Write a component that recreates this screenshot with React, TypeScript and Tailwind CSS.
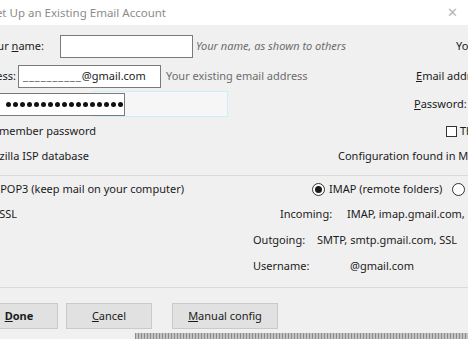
import React from "react";

const font = "font-['Noto_Sans','Liberation_Sans',sans-serif]";

function Input({ className, children }: { className?: string; children?: React.ReactNode }) {
  return (
    <div className={`flex h-[23px] shrink-0 items-center border border-[#7a7a7a] bg-white px-1 ${className ?? ""}`}>
      {children}
    </div>
  );
}

// Left text that is cut by the window edge: right-aligned in a box ending at `w`.
function Clip({ w, children }: { w: string; children: React.ReactNode }) {
  return <div className={`flex shrink-0 justify-end whitespace-nowrap ${w}`}>{children}</div>;
}

function Row({ h, left, leftW, right }: { h: string; left: React.ReactNode; leftW: string; right?: React.ReactNode }) {
  return (
    <div className={`flex shrink-0 items-center whitespace-nowrap ${h}`}>
      <div className={`flex shrink-0 items-center ${leftW}`}>{left}</div>
      {right}
    </div>
  );
}

function Button({ children, className }: { children: React.ReactNode; className?: string }) {
  return (
    <div className={`flex h-[26px] shrink-0 items-center justify-center border border-[#cacaca] bg-[#e1e1e1] ${className ?? ""}`}>
      {children}
    </div>
  );
}

export default function App() {
  return (
    <div className={`flex h-[339px] w-[468px] flex-col overflow-hidden bg-[#f0f0f0] text-[11px] text-[#1b1b1b] ${font}`}>
      {/* title bar */}
      <div className="flex h-[25px] shrink-0 items-center bg-white">
        <Clip w="w-[166px]">
          <span className="text-[11.5px] text-[#8c8c8c]">Set Up an Existing Email Account</span>
        </Clip>
        <span className="ml-auto mr-[10px] text-[13px] text-[#b5b5b5]">✕</span>
      </div>

      <div className="h-[6px] shrink-0" />

      <Row
        h="h-[30px]"
        leftW="w-[456px]"
        left={
          <>
            <Clip w="w-[44px]">
              <span>
                Your <u>n</u>ame:
              </span>
            </Clip>
            <Input className="ml-[16px] w-[133px]" />
            <span className="ml-[3px] italic text-[#6d6d6d]">Your name, as shown to others</span>
          </>
        }
        right={<span>Your name:</span>}
      />

      <Row
        h="h-[30px]"
        leftW="w-[416px]"
        left={
          <>
            <Clip w="w-[16px]">
              <span>Email address:</span>
            </Clip>
            <Input className="ml-[2px] w-[143px]">
              <span className="tracking-[1px] text-[#555]">__________</span>
              <span>@gmail.com</span>
            </Input>
            <span className="ml-[5px] text-[#6d6d6d]">Your existing email address</span>
          </>
        }
        right={
          <span>
            <u>E</u>mail address:
          </span>
        }
      />

      <Row
        h="h-[26px]"
        leftW="w-[414px]"
        left={
          <>
            <Input className="relative z-10 -ml-[2px] w-[127px] px-0">
              <div className="ml-[3px] flex shrink-0 gap-[2px]">
                {Array.from({ length: 17 }).map((_, i) => (
                  <span key={i} className="h-[5px] w-[5px] shrink-0 rounded-full bg-[#111]" />
                ))}
              </div>
            </Input>
            <div className="-ml-[32px] h-[26px] w-[135px] shrink-0 border border-[#cdeefb] bg-[#f6f6f6]" />
          </>
        }
        right={
          <>
            <span>
              <u>P</u>assword:
            </span>
            <span className="ml-[6px] h-[20px] w-[20px] shrink-0 border border-[#7a7a7a] bg-white" />
          </>
        }
      />

      <Row
        h="h-[28px]"
        leftW="w-[446px]"
        left={
          <Clip w="w-[96px]">
            <span>Remember password</span>
          </Clip>
        }
        right={
          <>
            <span className="h-[11px] w-[11px] shrink-0 border border-[#333] bg-white" />
            <span className="ml-[3px]">The</span>
          </>
        }
      />

      <Row
        h="h-[22px]"
        leftW="w-[338px]"
        left={
          <Clip w="w-[89px]">
            <span>Mozilla ISP database</span>
          </Clip>
        }
        right={<span>Configuration found in Mozilla ISP database</span>}
      />

      <div className="mt-[8px] h-px shrink-0 bg-[#dadada]" />

      <Row
        h="h-[26px]"
        leftW="w-[312px]"
        left={
          <Clip w="w-[184px]">
            <span>POP3 (keep mail on your computer)</span>
          </Clip>
        }
        right={
          <>
            <span className="flex h-[13px] w-[13px] shrink-0 items-center justify-center rounded-full border border-[#333] bg-white">
              <span className="h-[7px] w-[7px] rounded-full bg-[#1b1b1b]" />
            </span>
            <span className="ml-[4px]">IMAP (remote folders)</span>
            <span className="ml-[10px] h-[13px] w-[13px] shrink-0 rounded-full border border-[#333] bg-white" />
          </>
        }
      />

      <Row
        h="h-[24px]"
        leftW="w-[280px]"
        left={
          <Clip w="w-[17px]">
            <span>SSL</span>
          </Clip>
        }
        right={
          <>
            <span className="w-[67px] shrink-0">Incoming:</span>
            <span>IMAP, imap.gmail.com, 993, SSL</span>
          </>
        }
      />

      <Row
        h="h-[28px]"
        leftW="w-[253px]"
        left={null}
        right={
          <>
            <span className="w-[64px] shrink-0">Outgoing:</span>
            <span>SMTP, smtp.gmail.com, SSL</span>
          </>
        }
      />

      <Row
        h="h-[24px]"
        leftW="w-[253px]"
        left={null}
        right={
          <>
            <span className="w-[97px] shrink-0">Username:</span>
            <span>@gmail.com</span>
          </>
        }
      />

      <div className="mt-[9px] h-px shrink-0 bg-[#dadada]" />

      <div className="mt-[15px] flex shrink-0 items-center">
        <Button className="-ml-[20px] w-[78px] font-bold">
          <span>
            <u>D</u>one
          </span>
        </Button>
        <Button className="ml-[8px] w-[86px]">
          <span>
            <u>C</u>ancel
          </span>
        </Button>
        <Button className="ml-[20px] w-[106px]">
          <span>
            <u>M</u>anual config
          </span>
        </Button>
      </div>

      <div className="mt-[4px] ml-[135px] h-[6px] shrink-0 bg-[repeating-linear-gradient(90deg,#8a8a8a_0_1px,#c4c4c4_1px_3px)]" />
    </div>
  );
}
